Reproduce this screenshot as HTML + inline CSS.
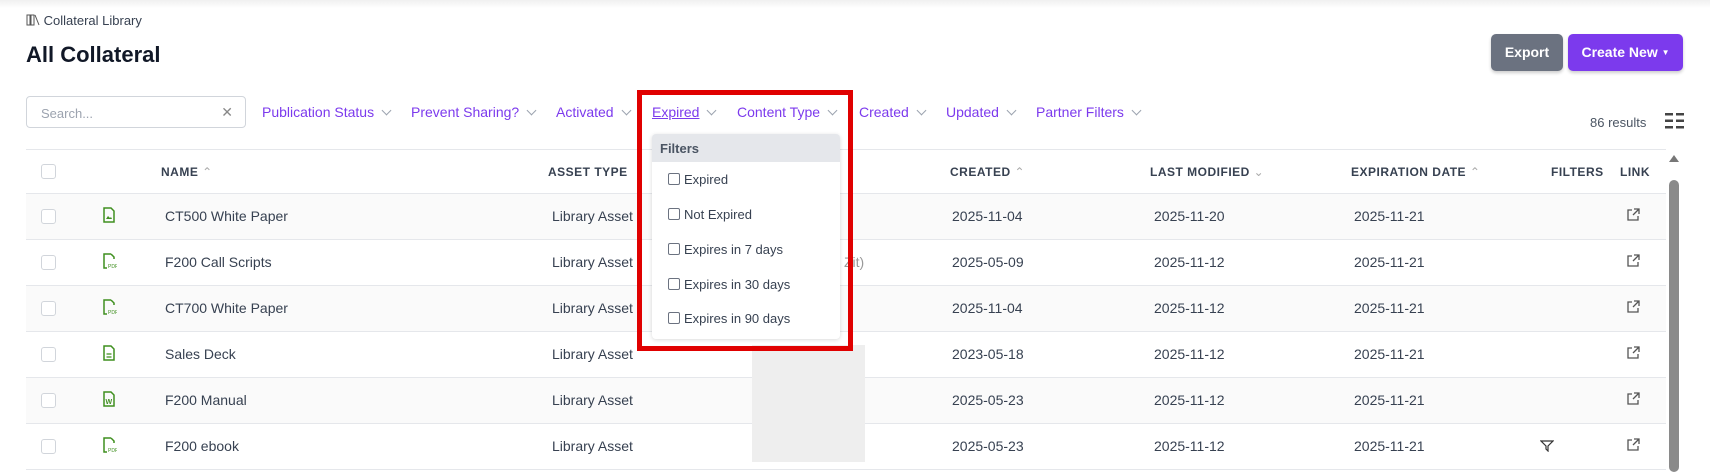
<!DOCTYPE html>
<html><head><meta charset="utf-8"><style>
*{box-sizing:border-box;margin:0;padding:0}
body{width:1710px;height:472px;overflow:hidden;background:#fff;font-family:"Liberation Sans",sans-serif;color:#374151;position:relative}
.a{position:absolute;white-space:nowrap}
.top{position:absolute;left:0;top:0;width:1710px;height:8px;background:linear-gradient(#f0f0f0,#fff)}
.f{position:absolute;top:104px;font-size:14px;color:#7c3aed}
.f:after{content:"";display:inline-block;width:6px;height:6px;border-right:1px solid #9ca3af;border-bottom:1px solid #9ca3af;transform:rotate(45deg);margin-left:9px;position:relative;top:-3px}
.th{position:absolute;top:165px;font-size:12px;font-weight:bold;letter-spacing:.5px;color:#374151}
.row{position:absolute;left:26px;width:1640px;height:46px;border-bottom:1px solid #e5e7eb}
.cb{position:absolute;left:15px;top:15px;width:15px;height:15px;border:1px solid #d1d5db;border-radius:3px;background:#fff}
.c{position:absolute;top:14px;font-size:14px;color:#374151}
.ic{position:absolute;left:77px;top:13px}
.lk{position:absolute;left:1600px;top:14px}
.blur{position:absolute;left:752px;width:113px;background:#eeeeee}
.di{position:absolute;left:668px;font-size:13px;color:#374151}
.di:before{content:"";display:inline-block;width:10px;height:10px;border:1px solid #6b7280;border-radius:2px;margin-right:4px;vertical-align:-1px}
</style></head><body>
<div class="top"></div>
<div class="a" style="left:26px;top:13px;font-size:13px;color:#374151">
<svg width="14" height="12" viewBox="0 0 14 12" style="vertical-align:-1px"><path d="M1 1h3v10H1zM5 1h3v10H5zM9 1l4 10" fill="none" stroke="#555" stroke-width="1"/></svg> Collateral Library</div>
<div class="a" style="left:26px;top:42px;font-size:22px;font-weight:bold;color:#111827">All Collateral</div>
<div class="a" style="left:1491px;top:34px;width:72px;height:37px;background:#6b7280;border-radius:5px;color:#fff;font-size:14px;font-weight:bold;text-align:center;line-height:37px;box-shadow:0 2px 3px rgba(0,0,0,.2)">Export</div>
<div class="a" style="left:1568px;top:34px;width:115px;height:37px;background:#7c3aed;border-radius:5px;color:#fff;font-size:14px;font-weight:bold;text-align:center;line-height:37px;box-shadow:0 2px 3px rgba(0,0,0,.2)">Create New <span style="font-size:8px;vertical-align:2px">▼</span></div>
<div class="a" style="left:26px;top:96px;width:220px;height:32px;border:1px solid #d1d5db;border-radius:4px;font-size:13px;color:#9ca3af;padding:9px 14px">Search...<span style="position:absolute;right:12px;top:7px;font-size:14px;color:#888">✕</span></div>
<div class="f" style="left:262px">Publication Status</div>
<div class="f" style="left:411px">Prevent Sharing?</div>
<div class="f" style="left:556px">Activated</div>
<div class="f" style="left:652px;text-decoration:underline">Expired</div>
<div class="f" style="left:737px">Content Type</div>
<div class="f" style="left:859px">Created</div>
<div class="f" style="left:946px">Updated</div>
<div class="f" style="left:1036px">Partner Filters</div>
<div class="a" style="left:1590px;top:115px;font-size:13px;color:#4b5563">86 results</div>
<svg class="a" style="left:1665px;top:112px" width="20" height="18"><g fill="#444"><rect x="0" y="1" width="8" height="2.5"/><rect x="11" y="1" width="8" height="2.5"/><rect x="0" y="7.5" width="8" height="2.5"/><rect x="11" y="7.5" width="8" height="2.5"/><rect x="0" y="14" width="8" height="2.5"/><rect x="11" y="14" width="8" height="2.5"/></g></svg>
<div class="a" style="left:26px;top:149px;width:1640px;height:1px;background:#e5e7eb"></div>
<div class="a" style="left:41px;top:164px;width:15px;height:15px;border:1px solid #d1d5db;border-radius:3px"></div>
<div class="th" style="left:161px">NAME <span style="color:#aaa;font-weight:normal">⌃</span></div>
<div class="th" style="left:548px">ASSET TYPE</div>
<div class="th" style="left:950px">CREATED <span style="color:#aaa;font-weight:normal">⌃</span></div>
<div class="th" style="left:1150px">LAST MODIFIED <span style="color:#aaa;font-weight:normal">⌄</span></div>
<div class="th" style="left:1351px">EXPIRATION DATE <span style="color:#aaa;font-weight:normal">⌃</span></div>
<div class="th" style="left:1551px">FILTERS</div>
<div class="th" style="left:1620px">LINK</div>
<div class="a" style="left:26px;top:193px;width:1640px;height:1px;background:#e5e7eb"></div>

<div class="row" style="top:194px;background:#fafafa"><div class="cb"></div><svg class="ic" width="12" height="16"><path d="M1 1h7l3 3v11H1z" fill="none" stroke="#3f8f1f" stroke-width="1.5"/><path d="M3 12l2-3 2 2 1-1 1 2z" fill="#3f8f1f"/></svg><div class="c" style="left:139px">CT500 White Paper</div><div class="c" style="left:526px">Library Asset</div><div class="c" style="left:926px">2025-11-04</div><div class="c" style="left:1128px">2025-11-20</div><div class="c" style="left:1328px">2025-11-21</div><svg class="lk" width="14" height="14"><path d="M6 2H2v10h10V8M8 1h5v5M13 1L7 7" fill="none" stroke="#555" stroke-width="1.3"/></svg></div>
<div class="row" style="top:240px"><div class="cb"></div><svg class="ic" width="14" height="16"><path d="M8 1H1v14h3M8 1l3 3v2" fill="none" stroke="#3f8f1f" stroke-width="1.5"/><text x="5" y="15" font-size="5" fill="#3f8f1f" font-family="Liberation Sans">PDF</text></svg><div class="c" style="left:139px">F200 Call Scripts</div><div class="c" style="left:526px">Library Asset</div><div class="c" style="left:926px">2025-05-09</div><div class="c" style="left:1128px">2025-11-12</div><div class="c" style="left:1328px">2025-11-21</div><svg class="lk" width="14" height="14"><path d="M6 2H2v10h10V8M8 1h5v5M13 1L7 7" fill="none" stroke="#555" stroke-width="1.3"/></svg></div>
<div class="row" style="top:286px;background:#fafafa"><div class="cb"></div><svg class="ic" width="14" height="16"><path d="M8 1H1v14h3M8 1l3 3v2" fill="none" stroke="#3f8f1f" stroke-width="1.5"/><text x="5" y="15" font-size="5" fill="#3f8f1f" font-family="Liberation Sans">PDF</text></svg><div class="c" style="left:139px">CT700 White Paper</div><div class="c" style="left:526px">Library Asset</div><div class="c" style="left:926px">2025-11-04</div><div class="c" style="left:1128px">2025-11-12</div><div class="c" style="left:1328px">2025-11-21</div><svg class="lk" width="14" height="14"><path d="M6 2H2v10h10V8M8 1h5v5M13 1L7 7" fill="none" stroke="#555" stroke-width="1.3"/></svg></div>
<div class="row" style="top:332px"><div class="cb"></div><svg class="ic" width="12" height="16"><path d="M1 1h7l3 3v11H1z" fill="none" stroke="#3f8f1f" stroke-width="1.5"/><path d="M3.5 9h5M3.5 12h5" stroke="#3f8f1f" stroke-width="1.3"/></svg><div class="c" style="left:139px">Sales Deck</div><div class="c" style="left:526px">Library Asset</div><div class="c" style="left:926px">2023-05-18</div><div class="c" style="left:1128px">2025-11-12</div><div class="c" style="left:1328px">2025-11-21</div><svg class="lk" width="14" height="14"><path d="M6 2H2v10h10V8M8 1h5v5M13 1L7 7" fill="none" stroke="#555" stroke-width="1.3"/></svg></div>
<div class="row" style="top:378px;background:#fafafa"><div class="cb"></div><svg class="ic" width="12" height="16"><path d="M1 1h7l3 3v11H1z" fill="none" stroke="#3f8f1f" stroke-width="1.5"/><text x="2.5" y="13" font-size="7" font-weight="bold" fill="#3f8f1f" font-family="Liberation Sans">W</text></svg><div class="c" style="left:139px">F200 Manual</div><div class="c" style="left:526px">Library Asset</div><div class="c" style="left:926px">2025-05-23</div><div class="c" style="left:1128px">2025-11-12</div><div class="c" style="left:1328px">2025-11-21</div><svg class="lk" width="14" height="14"><path d="M6 2H2v10h10V8M8 1h5v5M13 1L7 7" fill="none" stroke="#555" stroke-width="1.3"/></svg></div>
<div class="row" style="top:424px"><div class="cb"></div><svg class="ic" width="14" height="16"><path d="M8 1H1v14h3M8 1l3 3v2" fill="none" stroke="#3f8f1f" stroke-width="1.5"/><text x="5" y="15" font-size="5" fill="#3f8f1f" font-family="Liberation Sans">PDF</text></svg><div class="c" style="left:139px">F200 ebook</div><div class="c" style="left:526px">Library Asset</div><div class="c" style="left:926px">2025-05-23</div><div class="c" style="left:1128px">2025-11-12</div><div class="c" style="left:1328px">2025-11-21</div><svg style="position:absolute;left:1514px;top:16px" width="14" height="12"><path d="M1 1h12L8 6v5L6 9V6z" fill="none" stroke="#333" stroke-width="1.2"/></svg><svg class="lk" width="14" height="14"><path d="M6 2H2v10h10V8M8 1h5v5M13 1L7 7" fill="none" stroke="#555" stroke-width="1.3"/></svg></div>

<div class="blur" style="top:345px;height:117px"></div>
<div class="a" style="left:844px;top:254px;font-size:14px;color:#999">Zit)</div>

<div class="a" style="left:1669px;top:155px;width:0;height:0;border-left:5px solid transparent;border-right:5px solid transparent;border-bottom:7px solid #777"></div>
<div class="a" style="left:1669px;top:180px;width:10px;height:292px;background:#8a8a8a;border-radius:5px"></div>

<div class="a" style="left:637px;top:90px;width:216px;height:261px;border:5px solid #e00000"></div>
<div class="a" style="left:652px;top:134px;width:188px;height:205px;background:#fff;border-radius:4px;box-shadow:0 1px 4px rgba(0,0,0,.15);overflow:hidden">
<div style="height:28px;background:#e5e7eb;font-size:13px;font-weight:bold;color:#4b5563;padding:7px 8px">Filters</div></div>
<div class="di" style="top:172px">Expired</div>
<div class="di" style="top:207px">Not Expired</div>
<div class="di" style="top:242px">Expires in 7 days</div>
<div class="di" style="top:277px">Expires in 30 days</div>
<div class="di" style="top:311px">Expires in 90 days</div>
</body></html>
